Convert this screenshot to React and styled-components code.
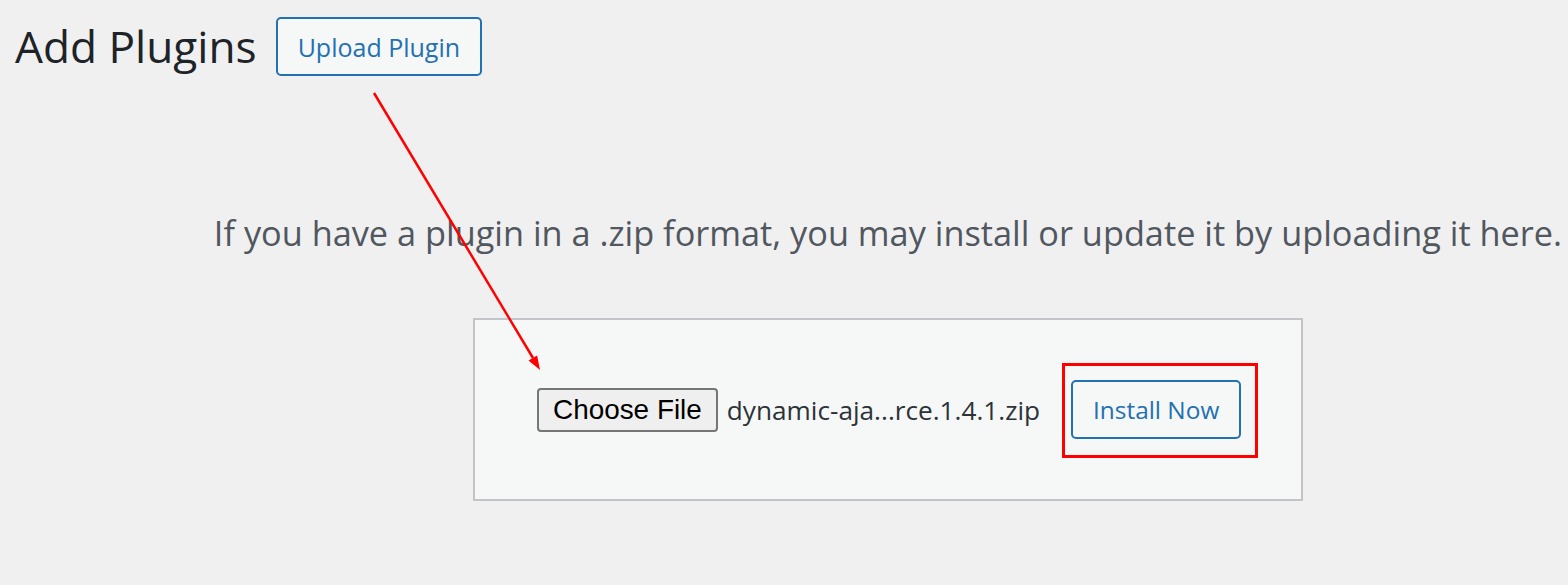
import styled, { createGlobalStyle } from 'styled-components'

const GlobalStyle = createGlobalStyle`
  html, body {
    margin: 0;
    background: #f0f0f1;
    overflow: hidden;
  }
  body {
    font-family: "Open Sans", "Noto Sans", sans-serif;
  }
`

const Page = styled.div`
  position: relative;
  width: 1568px;
  height: 585px;
  overflow: hidden;
  box-sizing: border-box;
  padding: 17px 0 0 15px;
`

const Header = styled.div`
  display: flex;
  align-items: center;
  gap: 19px;
`

const Title = styled.h1`
  margin: 0;
  font-size: 44.2px;
  font-weight: 400;
  color: #1d2327;
  line-height: 1.2;
`

const OutlineButton = styled.button`
  box-sizing: border-box;
  height: ${props => props.$height}px;
  padding: 0 ${props => props.$padX}px;
  border: 2px solid #2271b1;
  border-radius: 5px;
  background: #f6f7f7;
  color: #2271b1;
  font-family: inherit;
  font-size: ${props => props.$size}px;
  cursor: pointer;
`

const UploadSection = styled.div`
  width: 1746px;
  display: flex;
  flex-direction: column;
  align-items: center;
`

const Help = styled.p`
  margin: 135px 0 0;
  font-size: 34.3px;
  line-height: 44px;
  color: #50575e;
  white-space: nowrap;
`

const UploadForm = styled.form`
  box-sizing: border-box;
  width: 830px;
  height: 183px;
  margin-top: 63px;
  padding-left: 62px;
  border: 2px solid #c3c4c7;
  background: #f6f7f7;
  display: flex;
  align-items: center;
`

const ChooseFile = styled.span`
  box-sizing: border-box;
  height: 44px;
  padding: 0 14px;
  display: inline-flex;
  align-items: center;
  border: 2px solid #767676;
  border-radius: 4px;
  background: #efefef;
  color: #000;
  font-family: "Liberation Sans", Arial, sans-serif;
  font-size: 27.9px;
`

const FileName = styled.span`
  margin-left: 9px;
  font-size: 26.2px;
  color: #2c3338;
`

const Highlight = styled.span`
  position: relative;
  margin-left: 31px;
  display: inline-flex;

  &::after {
    content: '';
    position: absolute;
    top: -17px;
    left: -9px;
    right: -17px;
    bottom: -19px;
    border: 3px solid #ff0000;
    pointer-events: none;
  }
`

const Annotation = styled.svg`
  position: absolute;
  top: 0;
  left: 0;
  pointer-events: none;
`

const App = () => (
  <>
    <GlobalStyle />
    <Page>
      <Header>
        <Title>Add Plugins</Title>
        <OutlineButton $height={59} $padX={20} $size={25}>Upload Plugin</OutlineButton>
      </Header>
      <UploadSection>
        <Help>If you have a plugin in a .zip format, you may install or update it by uploading it here.</Help>
        <UploadForm>
          <ChooseFile>Choose File</ChooseFile>
          <FileName>dynamic-aja...rce.1.4.1.zip</FileName>
          <Highlight>
            <OutlineButton type="button" $height={59} $padX={20} $size={24.4}>Install Now</OutlineButton>
          </Highlight>
        </UploadForm>
      </UploadSection>
      <Annotation width="1568" height="585">
        <line x1="374" y1="93" x2="533" y2="358" stroke="#ff0000" strokeWidth="2.5" />
        <polygon points="540,370 528.5,360.6 537.1,355.4" fill="#ff0000" />
      </Annotation>
    </Page>
  </>
)

export default App
